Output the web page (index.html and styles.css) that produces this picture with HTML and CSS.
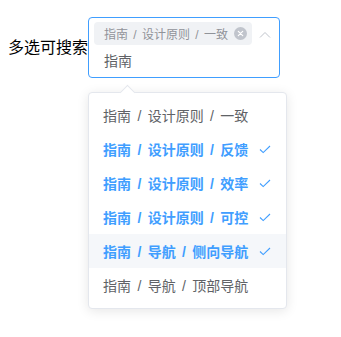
FILE: index.html
```html
<!DOCTYPE html>
<html>
<head>
<meta charset="utf-8">
<link rel="stylesheet" href="styles.css">
</head>
<body>
<div class="page">
  <div class="demo">
    <span class="label">多选可搜索</span>
    <div class="cascader">
      <div class="tags">
        <span class="tag"><span class="tag-text">指南 / 设计原则 / 一致</span><span class="tag-close"><svg width="13" height="13" viewBox="0 0 13 13"><circle cx="6.5" cy="6.5" r="6.5" fill="#c0c4cc"/><path d="M4.3 4.3L8.7 8.7M8.7 4.3L4.3 8.7" stroke="#fff" stroke-width="1.2" stroke-linecap="round"/></svg></span></span>
        <span class="arrow"><svg width="12" height="8" viewBox="0 0 12 8"><path d="M1 6.5L6 1.5L11 6.5" fill="none" stroke="#c0c4cc" stroke-width="1"/></svg></span>
      </div>
      <div class="search">指南</div>
    </div>
  </div>
  <div class="dropdown">
    <span class="caret"></span>
    <ul class="list">
      <li class="item">指南 / 设计原则 / 一致</li>
      <li class="item checked">指南 / 设计原则 / 反馈<svg class="check" width="12" height="9" viewBox="0 0 12 9"><path d="M1 4.5L4.2 7.6L11 1" fill="none" stroke="#409eff" stroke-width="1.1"/></svg></li>
      <li class="item checked">指南 / 设计原则 / 效率<svg class="check" width="12" height="9" viewBox="0 0 12 9"><path d="M1 4.5L4.2 7.6L11 1" fill="none" stroke="#409eff" stroke-width="1.1"/></svg></li>
      <li class="item checked">指南 / 设计原则 / 可控<svg class="check" width="12" height="9" viewBox="0 0 12 9"><path d="M1 4.5L4.2 7.6L11 1" fill="none" stroke="#409eff" stroke-width="1.1"/></svg></li>
      <li class="item checked hover">指南 / 导航 / 侧向导航<svg class="check" width="12" height="9" viewBox="0 0 12 9"><path d="M1 4.5L4.2 7.6L11 1" fill="none" stroke="#409eff" stroke-width="1.1"/></svg></li>
      <li class="item">指南 / 导航 / 顶部导航</li>
    </ul>
  </div>
</div>
</body>
</html>
```
FILE: styles.css
```css
html, body { margin: 0; padding: 0; background: #fff; }
body {
  font-family: "Liberation Sans", "Noto Sans CJK SC", sans-serif;
}
.page {
  position: relative;
  width: 341px;
  height: 337px;
}
.demo {
  display: flex;
  align-items: center;
  padding: 17px 0 0 8px;
}
.label {
  font-size: 16px;
  color: #000;
  width: 80px;
  line-height: 20px;
}
.cascader {
  box-sizing: border-box;
  width: 192px;
  height: 61px;
  border: 1px solid #409eff;
  border-radius: 4px;
  padding: 4px 0 0 5px;
}
.tags {
  display: flex;
  align-items: center;
}
.tag {
  display: flex;
  align-items: center;
  box-sizing: border-box;
  height: 23px;
  width: 158px;
  background: #f0f2f5;
  border-radius: 4px;
  padding: 0 5px 0 10px;
  font-size: 12px;
  color: #909399;
  justify-content: space-between;
}
.tag-text { word-spacing: 2px; }
.tag-close { display: flex; }
.arrow { display: flex; margin-left: 7px; margin-top: 2px; }
.search {
  font-size: 14px;
  color: #606266;
  padding: 6px 0 0 10px;
  line-height: 20px;
}
.dropdown {
  position: absolute;
  left: 88px;
  top: 92px;
  width: 199px;
  box-sizing: border-box;
  background: #fff;
  border: 1px solid #e4e7ed;
  border-radius: 4px;
  box-shadow: 0 2px 12px rgba(0,0,0,0.1);
}
.caret {
  position: absolute;
  top: -6px;
  left: 33px;
  width: 10px;
  height: 10px;
  background: #fff;
  border-left: 1px solid #e4e7ed;
  border-top: 1px solid #e4e7ed;
  transform: rotate(45deg);
}
.list {
  list-style: none;
  margin: 0;
  padding: 5px 0 6px;
  position: relative;
}
.item {
  display: flex;
  align-items: center;
  height: 34px;
  padding: 0 15px 0 14px;
  font-size: 14px;
  color: #606266;
  word-spacing: 2.5px;
}
.item.checked { color: #409eff; font-weight: bold; }
.item.hover { background: #f5f7fa; }
.check { margin-left: auto; margin-right: 0; }
```
